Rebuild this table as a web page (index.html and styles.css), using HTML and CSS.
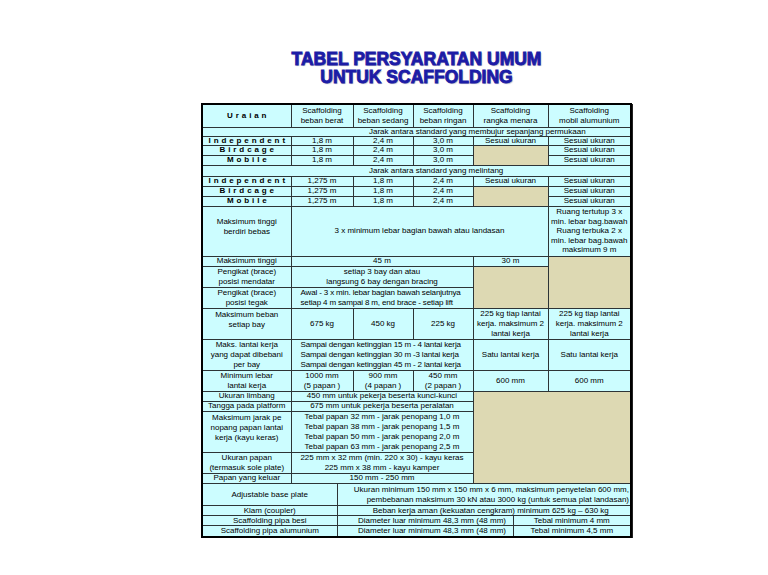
FILE: index.html
```html
<!DOCTYPE html>
<html>
<head>
<meta charset="utf-8">
<title>Tabel Persyaratan Umum untuk Scaffolding</title>
<link rel="stylesheet" href="styles.css">
</head>
<body>
<div class="slide">
  <h1 class="title">TABEL PERSYARATAN UMUM<br>UNTUK SCAFFOLDING</h1>
  <div class="frame">
    <table class="grid upper">
      <colgroup>
        <col class="w88"><col class="w62"><col class="w60"><col class="w60"><col class="w75"><col class="w82">
      </colgroup>
      <tr class="h22">
        <td class="sp">Uraian</td>
        <td class="ml">Scaffolding<br>beban berat</td>
        <td class="ml">Scaffolding<br>beban sedang</td>
        <td class="ml">Scaffolding<br>beban ringan</td>
        <td class="ml">Scaffolding<br>rangka menara</td>
        <td class="ml">Scaffolding<br>mobil alumunium</td>
      </tr>
      <tr class="h9">
        <td colspan="6" class="sect">Jarak antara standard yang membujur sepanjang permukaan</td>
      </tr>
      <tr class="h9">
        <td class="sp">Independent</td><td>1,8 m</td><td>2,4 m</td><td>3,0 m</td><td>Sesuai ukuran</td><td>Sesuai ukuran</td>
      </tr>
      <tr class="h10">
        <td class="sp">Birdcage</td><td>1,8 m</td><td>2,4 m</td><td>3,0 m</td><td rowspan="2" class="tan"></td><td>Sesuai ukuran</td>
      </tr>
      <tr class="h10">
        <td class="sp">Mobile</td><td>1,8 m</td><td>2,4 m</td><td>3,0 m</td><td>Sesuai ukuran</td>
      </tr>
      <tr class="h11">
        <td colspan="6" class="sect">Jarak antara standard yang melintang</td>
      </tr>
      <tr class="h10">
        <td class="sp">Independent</td><td>1,275 m</td><td>1,8 m</td><td>2,4 m</td><td>Sesuai ukuran</td><td>Sesuai ukuran</td>
      </tr>
      <tr class="h10">
        <td class="sp">Birdcage</td><td>1,275 m</td><td>1,8 m</td><td>2,4 m</td><td rowspan="2" class="tan"></td><td>Sesuai ukuran</td>
      </tr>
      <tr class="h10">
        <td class="sp">Mobile</td><td>1,275 m</td><td>1,8 m</td><td>2,4 m</td><td>Sesuai ukuran</td>
      </tr>
      <tr class="h50">
        <td class="ml lift">Maksimum tinggi<br>berdiri bebas</td>
        <td colspan="4">3 x minimum lebar bagian bawah atau landasan</td>
        <td class="ml tight">Ruang tertutup 3 x<br>min. lebar bag.bawah<br>Ruang terbuka 2 x<br>min. lebar bag.bawah<br>maksimum 9 m</td>
      </tr>
      <tr class="h10">
        <td>Maksimum tinggi</td><td colspan="3">45 m</td><td>30 m</td><td rowspan="3" class="tan"></td>
      </tr>
      <tr class="h20">
        <td class="ml">Pengikat (brace)<br>posisi mendatar</td>
        <td colspan="3" class="ml">setiap 3 bay dan atau<br>langsung 6 bay dengan bracing</td>
        <td rowspan="2" class="tan"></td>
      </tr>
      <tr class="h20">
        <td class="ml">Pengikat (brace)<br>posisi tegak</td>
        <td colspan="3" class="ml left">Awal - 3 x min. lebar bagian bawah selanjutnya<br>setiap 4 m sampai 8 m, end brace - setiap lift</td>
      </tr>
      <tr class="h30">
        <td class="ml top">Maksimum beban<br>setiap bay</td>
        <td>675 kg</td><td>450 kg</td><td>225 kg</td>
        <td class="ml">225 kg tiap lantai<br>kerja. maksimum 2<br>lantai kerja</td>
        <td class="ml">225 kg tiap lantai<br>kerja. maksimum 2<br>lantai kerja</td>
      </tr>
      <tr class="h30">
        <td class="ml">Maks. lantai kerja<br>yang dapat dibebani<br>per bay</td>
        <td colspan="3" class="ml left">Sampai dengan ketinggian 15 m - 4 lantai kerja<br>Sampai dengan ketinggian 30 m -3 lantai kerja<br>Sampai dengan ketinggian 45 m - 2 lantai kerja</td>
        <td>Satu lantai kerja</td><td>Satu lantai kerja</td>
      </tr>
      <tr class="h19">
        <td class="ml">Minimum lebar<br>lantai kerja</td>
        <td class="ml">1000 mm<br>(5 papan )</td>
        <td class="ml">900 mm<br>(4 papan )</td>
        <td class="ml">450 mm<br>(2 papan )</td>
        <td>600 mm</td><td>600 mm</td>
      </tr>
      <tr class="h10">
        <td>Ukuran limbang</td><td colspan="3">450 mm untuk pekerja beserta kunci-kunci</td>
        <td colspan="2" rowspan="5" class="tan"></td>
      </tr>
      <tr class="h10">
        <td>Tangga pada platform</td><td colspan="3">675 mm untuk pekerja beserta peralatan</td>
      </tr>
      <tr class="h40">
        <td class="ml top">Maksimum jarak pe<br>nopang papan lantai<br>kerja (kayu keras)</td>
        <td colspan="3" class="ml">Tebal papan 32 mm - jarak penopang 1,0 m<br>Tebal papan 38 mm - jarak penopang 1,5 m<br>Tebal papan 50 mm - jarak penopang 2,0 m<br>Tebal papan 63 mm - jarak penopang 2,5 m</td>
      </tr>
      <tr class="h19">
        <td class="ml">Ukuran papan<br>(termasuk sole plate)</td>
        <td colspan="3" class="ml">225 mm x 32 mm (min. 220 x 30) - kayu keras<br>225 mm x 38 mm - kayu kamper</td>
      </tr>
      <tr class="h10">
        <td>Papan yang keluar</td><td colspan="3">150 mm - 250 mm</td>
      </tr>
    </table>
    <table class="grid lower">
      <colgroup>
        <col class="w134"><col class="w176"><col class="w117">
      </colgroup>
      <tr class="h22">
        <td>Adjustable base plate</td>
        <td colspan="2" class="ml right">Ukuran minimum 150 mm x 150 mm x 6 mm, maksimum penyetelan 600 mm,<br>pembebanan maksimum 30 kN atau 3000 kg (untuk semua plat landasan)</td>
      </tr>
      <tr class="h10">
        <td>Klam (coupler)</td>
        <td colspan="2" class="shift">Beban kerja aman (kekuatan cengkram) minimum 625 kg – 630 kg</td>
      </tr>
      <tr class="h10">
        <td>Scaffolding pipa besi</td>
        <td class="shift">Diameter luar minimum 48,3 mm (48 mm)</td>
        <td>Tebal minimum 4 mm</td>
      </tr>
      <tr class="h10">
        <td>Scaffolding pipa alumunium</td>
        <td class="shift">Diameter luar minimum 48,3 mm (48 mm)</td>
        <td>Tebal minimum 4,5 mm</td>
      </tr>
    </table>
  </div>
</div>
</body>
</html>
```

FILE: styles.css
```css
html, body {
  margin: 0;
  padding: 0;
  background: #ffffff;
}

body {
  font-family: "Liberation Sans", Arial, sans-serif;
  color: #000;
}

.slide {
  width: 431px;
  padding: 50px 0 0 201px;
}

.title {
  margin: 0;
  font-family: "Liberation Sans", Arial, sans-serif;
  font-size: 17.5px;
  line-height: 18px;
  font-weight: 900;
  text-align: center;
  color: #1c1ca6;
  -webkit-text-stroke: 0.9px #1c1ca6;
  text-shadow: 1px 1px 1px rgba(40, 40, 80, 0.35);
}

.frame {
  margin-top: 17px;
  border: 2px solid #000;
  background: #ccfdff;
  box-shadow: 1px 1px 0 #222;
}

.grid {
  width: 100%;
  border-collapse: collapse;
  table-layout: fixed;
  border-style: hidden;
  font-size: 8px;
  line-height: 8px;
}

.lower {
  border-style: solid hidden hidden hidden;
  border-top: 1px solid #2d3436;
}

.grid td {
  border: 1px solid #2d3436;
  padding: 0;
  text-align: center;
  vertical-align: middle;
  white-space: nowrap;
  overflow: hidden;
}

.w88 { width: 88px; }
.w62 { width: 62px; }
.w60 { width: 60px; }
.w75 { width: 75px; }
.w82 { width: 82px; }
.w134 { width: 134px; }
.w176 { width: 176px; }
.w117 { width: 117px; }

.h9 { height: 9px; }
.h10 { height: 10px; }
.h11 { height: 11px; }
.h19 { height: 19px; }
.h20 { height: 20px; }
.h22 { height: 22px; }
.h30 { height: 30px; }
.h40 { height: 40px; }
.h50 { height: 50px; }

.grid td.ml {
  line-height: 10px;
}

.grid td.tight {
  line-height: 9.6px;
}

.grid td.sp {
  font-weight: bold;
  letter-spacing: 2.9px;
  padding-left: 3px;
}

.grid td.sect {
  text-align: left;
  padding-left: 166px;
}

.grid td.left {
  text-align: left;
  padding-left: 9px;
  letter-spacing: -0.15px;
}

.grid td.right {
  text-align: right;
  padding-right: 1px;
}

.grid td.shift {
  padding-left: 14px;
}

.grid td.top {
  vertical-align: top;
  padding-top: 1px;
}

.grid td.lift {
  padding-bottom: 8px;
}

.grid td.tan {
  background: #ddd9b3;
}
```
